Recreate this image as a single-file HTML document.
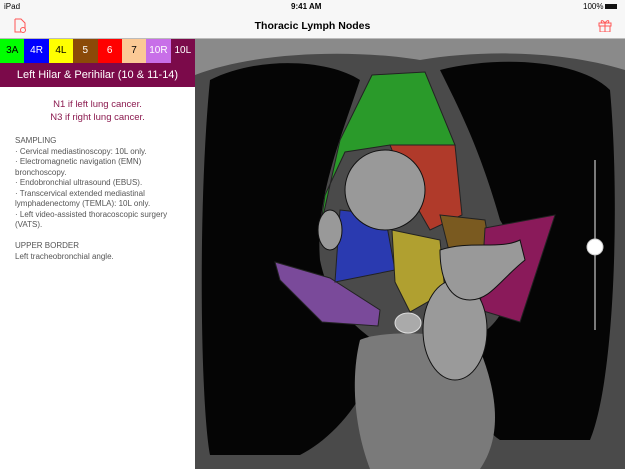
<!DOCTYPE html>
<html><head><style>
body{margin:0;width:625px;height:469px;overflow:hidden;font-family:"Liberation Sans",sans-serif;background:#fff;position:relative}
.status{position:absolute;top:0;left:0;width:625px;height:14px;background:#f7f7f7;font-size:8px}
.nav{position:absolute;top:14px;left:0;width:625px;height:25px;background:#f7f7f7;border-bottom:1px solid #bbb;box-sizing:border-box}
.tabs{position:absolute;top:39px;left:0;width:195px;height:24px;display:flex}
.tabs div{height:24px;line-height:24px;text-align:center;font-size:10px;width:24.4px}
.hdr{position:absolute;top:63px;left:0;width:195px;height:24px;background:#7b0a4a;color:#fff;font-size:11px;line-height:24px;text-align:center}
.side{position:absolute;top:87px;left:0;width:195px;height:382px;background:#fff}
.red{color:#8b1a4f;font-size:9.5px;text-align:center;line-height:12.5px;margin-top:12px}
.txt{color:#555;font-size:8px;line-height:10.5px;margin:12px 0 0 15px;width:175px}
</style></head><body>
<div class="status"><span style="position:absolute;left:4px;top:2px">iPad</span><span style="position:absolute;left:291px;top:2px;font-weight:bold">9:41 AM</span><span style="position:absolute;left:583px;top:2px">100%</span><span style="position:absolute;left:605px;top:4px;width:12px;height:5px;background:#111"></span></div>
<div class="nav"><div style="text-align:center;font-weight:bold;font-size:10.5px;line-height:25px">Thoracic Lymph Nodes</div>
<svg style="position:absolute;left:13px;top:4px" width="14" height="16"><path d="M2 1h6l4 4v6M2 1v13h6" fill="none" stroke="#f55" stroke-width="1"/><circle cx="10" cy="12" r="2.5" fill="none" stroke="#f55"/></svg>
<svg style="position:absolute;left:598px;top:4px" width="14" height="14"><rect x="1" y="5" width="12" height="3" fill="none" stroke="#f55"/><rect x="2" y="8" width="10" height="6" fill="none" stroke="#f55"/><path d="M7 5v9M7 5C4 1 2 3 4 5M7 5c3-4 5-2 3 0" fill="none" stroke="#f55"/></svg></div>
<div class="tabs"><div style="background:#0f0">3A</div><div style="background:#00f;color:#fff">4R</div><div style="background:#ff0">4L</div><div style="background:#8b4a08;color:#fff">5</div><div style="background:#f00;color:#fff">6</div><div style="background:#fbc995">7</div><div style="background:#c86fe8;color:#fff">10R</div><div style="background:#7b0a4a;color:#fff">10L</div></div>
<div class="hdr">Left Hilar &amp; Perihilar (10 &amp; 11-14)</div>
<div class="side"><div class="red">N1 if left lung cancer.<br>N3 if right lung cancer.</div>
<div class="txt">SAMPLING<br>· Cervical mediastinoscopy: 10L only.<br>· Electromagnetic navigation (EMN) bronchoscopy.<br>· Endobronchial ultrasound (EBUS).<br>· Transcervical extended mediastinal lymphadenectomy (TEMLA): 10L only.<br>· Left video-assisted thoracoscopic surgery (VATS).<br><br>UPPER BORDER<br>Left tracheobronchial angle.</div></div>
<svg style="position:absolute;left:195px;top:39px" width="430" height="430" viewBox="195 39 430 430">
<rect x="195" y="39" width="430" height="430" fill="#4a4a4a"/>
<path d="M195 39H625V70C560 50 480 50 420 60C360 50 260 50 195 75Z" fill="#8a8a8a"/>
<path d="M210 80C260 55 330 60 360 80C340 140 315 200 320 260C330 310 360 330 380 345C370 400 330 440 300 455H210C200 400 198 200 210 80Z" fill="#050505"/>
<path d="M440 70C500 55 580 60 610 90C620 200 615 380 590 440H500C470 420 470 380 470 340C520 320 520 250 500 220C480 150 460 110 440 70Z" fill="#050505"/>
<path d="M360 340C380 330 460 330 480 350C500 400 500 440 480 469H370C355 430 350 380 360 340Z" fill="#7a7a7a"/>
<polygon points="372,75 425,72 455,145 390,145 345,152 325,195 320,230 340,140" fill="#2a9a2a" stroke="#222"/>
<polygon points="390,145 455,145 462,215 430,230 410,195" fill="#b03a2a" stroke="#222"/>
<polygon points="440,215 485,220 490,250 450,255" fill="#7a5a20" stroke="#222"/>
<polygon points="485,228 555,215 520,322 480,310" fill="#8a1a5a" stroke="#222"/>
<polygon points="275,262 330,278 380,310 378,326 322,322 280,280" fill="#7a4a9a" stroke="#222"/>
<polygon points="340,210 385,215 395,270 335,282" fill="#2a3ab0" stroke="#222"/>
<polygon points="392,230 440,240 445,292 410,312 395,282" fill="#b0a030" stroke="#222"/>
<ellipse cx="385" cy="190" rx="40" ry="40" fill="#999" stroke="#111"/>
<ellipse cx="455" cy="330" rx="32" ry="50" fill="#9a9a9a" stroke="#111"/>
<path d="M440 250C470 240 500 250 520 240L525 260C500 280 490 300 470 300C450 300 440 280 440 250Z" fill="#999" stroke="#111"/>
<ellipse cx="330" cy="230" rx="12" ry="20" fill="#999" stroke="#111"/>
<ellipse cx="408" cy="323" rx="13" ry="10" fill="#aaa" stroke="#ddd"/>
<line x1="595" y1="160" x2="595" y2="330" stroke="#eee"/>
<circle cx="595" cy="247" r="8" fill="#fff" stroke="#ccc"/>
</svg>
</body></html>
